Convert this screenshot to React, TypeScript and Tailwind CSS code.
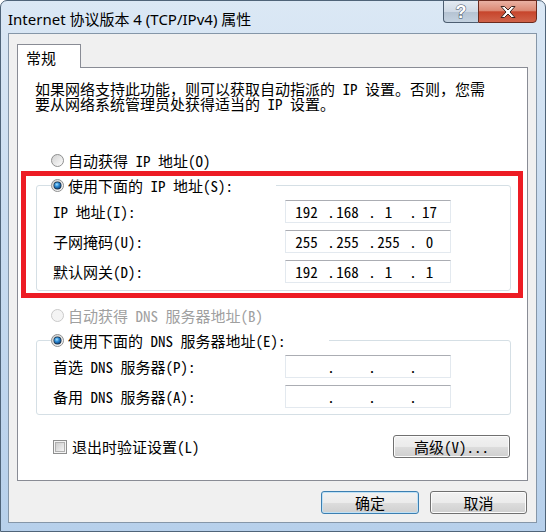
import React from "react";

const sim = "[font-family:'Noto_Sans_Mono_CJK_SC','Liberation_Mono','Noto_Sans_CJK_SC',monospace]";

function Radio({ checked, disabled }: { checked?: boolean; disabled?: boolean }) {
  return (
    <svg width="13" height="13" viewBox="0 0 13 13" className="shrink-0">
      <defs>
        <linearGradient id="rfill" x1="0" y1="0" x2="1" y2="1">
          <stop offset="0" stopColor="#cfcfcf" />
          <stop offset="1" stopColor="#ffffff" />
        </linearGradient>
        <radialGradient id="rdot" cx="0.4" cy="0.35" r="0.7">
          <stop offset="0" stopColor="#a8e1ff" />
          <stop offset="0.45" stopColor="#2f8fd8" />
          <stop offset="1" stopColor="#0b3f7a" />
        </radialGradient>
      </defs>
      <circle cx="6.5" cy="6.5" r="6" fill={disabled ? "#f4f4f4" : "url(#rfill)"} stroke={disabled ? "#c9c9c9" : "#8e8f8f"} />
      {checked && (
        <>
          <circle cx="6.5" cy="6.5" r="4" fill="#1f2f3f" />
          <circle cx="6.5" cy="6.5" r="3.3" fill="url(#rdot)" />
        </>
      )}
    </svg>
  );
}

function Check() {
  return (
    <svg width="14" height="14" viewBox="0 0 14 14" className="shrink-0">
      <defs>
        <linearGradient id="cfill" x1="0" y1="0" x2="1" y2="1">
          <stop offset="0" stopColor="#cbcbcb" />
          <stop offset="1" stopColor="#f6f6f6" />
        </linearGradient>
      </defs>
      <rect x="0.5" y="0.5" width="13" height="13" fill="#f4f4f4" stroke="#8e8f8f" />
      <rect x="2.5" y="2.5" width="9" height="9" fill="url(#cfill)" stroke="#b0b0b0" />
    </svg>
  );
}

function IpField({ parts }: { parts?: string[] }) {
  const p = parts ?? ["", "", "", ""];
  return (
    <div className={`flex h-[23px] w-[166px] items-center border border-[#e3e9ef] border-t-[#abadb3] bg-white text-[15px] leading-[15px] text-black ${sim}`}>
      {p.map((v, i) => (
        <div key={i} className="flex w-[41px] items-center">
          <span className="w-[8px] text-center">{i > 0 ? "." : ""}</span>
          <span className="w-[25px] text-center">{v}</span>
        </div>
      ))}
    </div>
  );
}

function Row({ label, parts }: { label: string; parts?: string[] }) {
  return (
    <div className="flex h-[23px] items-center pl-[16px]">
      <span className="w-[232px] whitespace-nowrap">{label}</span>
      <IpField parts={parts} />
    </div>
  );
}

function WinButton({ children, primary, className = "" }: { children: React.ReactNode; primary?: boolean; className?: string }) {
  return (
    <div
      className={`flex h-[23px] items-center justify-center rounded-[3px] border bg-[linear-gradient(180deg,#f2f2f2_0%,#ebebeb_50%,#dddddd_51%,#cfcfcf_100%)] text-[15px] leading-[15px] text-black ${sim} ${
        primary ? "border-[#3c7fb1] shadow-[inset_0_0_0_1px_#bfe1f6]" : "border-[#707070] shadow-[inset_0_0_0_1px_#fcfcfc]"
      } ${className}`}
    >
      {children}
    </div>
  );
}

export default function App() {
  return (
    <div className="relative h-[532px] w-[546px] overflow-hidden bg-white">
      <div className="flex h-full w-full flex-col rounded-t-[7px] border border-[#4f6479] bg-[linear-gradient(180deg,#dbe8f5_0%,#c9dcf0_40%,#b7d0eb_100%)] pb-[8px] pl-[7px] pr-[8px]">
        {/* title bar */}
        <div className="flex h-[32px] items-start justify-between">
          <div className="pt-[8px] text-[15px] leading-[20px] text-black [font-family:'Noto_Sans','Noto_Sans_CJK_SC',sans-serif]">
            Internet 协议版本 4 (TCP/IPv4) 属性
          </div>
          <div className="-mt-px flex h-[23px]">
            <div className="flex w-[35px] items-center justify-center rounded-bl-[4px] border border-r-0 border-[#4d5e71] bg-[linear-gradient(180deg,#e3eaf2_0%,#cfd9e5_50%,#b4c2d2_51%,#c4d2e0_100%)] text-[18px] font-bold leading-none text-white [font-family:'Liberation_Sans',sans-serif] [-webkit-text-stroke:1px_#3d4d5f] [paint-order:stroke_fill]">
              ?
            </div>
            <div className="flex w-[59px] items-center justify-center rounded-br-[4px] border border-[#6b2a1e] bg-[linear-gradient(180deg,#eab1a3_0%,#dc8a75_45%,#c7452c_52%,#d0634a_100%)]">
              <svg width="18" height="14" viewBox="0 0 18 14">
                <path d="M2 1.5 L5.5 1.5 L9 5 L12.5 1.5 L16 1.5 L11 7 L16 12.5 L12.5 12.5 L9 9 L5.5 12.5 L2 12.5 L7 7 Z" fill="#ffffff" stroke="#3a2420" strokeWidth="1" strokeLinejoin="round" />
              </svg>
            </div>
          </div>
        </div>

        {/* client area */}
        <div className={`flex flex-1 flex-col border border-[#8596a8] bg-[#f0f0f0] text-[15px] leading-[15px] text-black ${sim}`}>
          <div className="ml-[8px] mt-[10px] flex">
            <div className="relative z-10 -mb-px h-[24px] w-[64px] border border-b-0 border-[#898c95] bg-white pl-[8px] pt-[5px]">常规</div>
          </div>
          <div className="ml-[8px] flex h-[414px] w-[511px] flex-col border border-[#898c95] bg-white">
            <div className="whitespace-nowrap pl-[17px] pt-[13px]">
              <div className="h-[15px]">如果网络支持此功能，则可以获取自动指派的 IP 设置。否则，您需</div>
              <div className="h-[15px]">要从网络系统管理员处获得适当的 IP 设置。</div>
            </div>

            <div className="ml-[33px] mt-[41px] flex h-[16px] items-center gap-[4px]">
              <Radio />
              <span>自动获得 IP 地址(O)</span>
            </div>

            <fieldset className="ml-[18px] mt-[9px] w-[475px] rounded-[3px] border border-[#d5dfe5] pb-[7px]">
              <legend className="ml-[14px] flex h-[16px] w-[225px] items-center gap-[4px]">
                <Radio checked />
                <span>使用下面的 IP 地址(S):</span>
              </legend>
              <div className="flex flex-col gap-[7px] pt-[7px]">
                <Row label="IP 地址(I):" parts={["192", "168", "1", "17"]} />
                <Row label="子网掩码(U):" parts={["255", "255", "255", "0"]} />
                <Row label="默认网关(D):" parts={["192", "168", "1", "1"]} />
              </div>
            </fieldset>

            <div className="ml-[33px] mt-[16px] flex h-[16px] items-center gap-[4px] text-[#a0a0a0]">
              <Radio disabled />
              <span>自动获得 DNS 服务器地址(B)</span>
            </div>

            <fieldset className="ml-[18px] mt-[9px] w-[475px] rounded-[3px] border border-[#d5dfe5] pb-[6px]">
              <legend className="ml-[14px] flex h-[16px] w-[278px] items-center gap-[4px]">
                <Radio checked />
                <span>使用下面的 DNS 服务器地址(E):</span>
              </legend>
              <div className="flex flex-col gap-[7px] pt-[7px]">
                <Row label="首选 DNS 服务器(P):" />
                <Row label="备用 DNS 服务器(A):" />
              </div>
            </fieldset>

            <div className="ml-[35px] mr-[17px] mt-[20px] flex h-[23px] items-center justify-between">
              <div className="flex items-center gap-[5px]">
                <Check />
                <span>退出时验证设置(L)</span>
              </div>
              <WinButton className="w-[117px]">高级(V)...</WinButton>
            </div>
          </div>

          <div className="mt-[10px] flex justify-end gap-[11px] pr-[9px]">
            <WinButton primary className="w-[98px]">确定</WinButton>
            <WinButton className="w-[97px]">取消</WinButton>
          </div>
        </div>
      </div>

      {/* red annotation box */}
      <div className="pointer-events-none absolute left-[21px] top-[171px] h-[127px] w-[502px] border-[5px] border-[#ed1c24]" />
    </div>
  );
}
